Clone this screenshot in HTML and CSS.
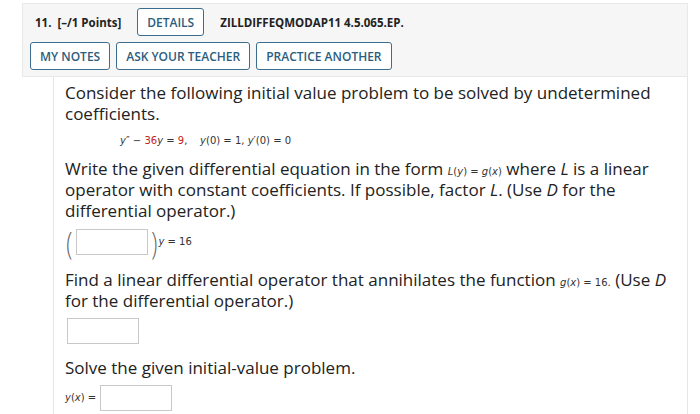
FILE: index.html
```html
<!DOCTYPE html>
<html lang="en">
<head>
  <meta charset="UTF-8">
  <title>Question 11</title>
  <link rel="stylesheet" href="styles.css">
</head>
<body>
  <div class="page">
    <div class="qhead">
      <div class="qrow">
        <span class="qnum">11.</span>
        <span class="qpts">[&ndash;/1 Points]</span>
        <button class="btn">DETAILS</button>
        <span class="qcode">ZILLDIFFEQMODAP11 4.5.065.EP.</span>
      </div>
      <div class="qrow">
        <button class="btn">MY NOTES</button>
        <button class="btn">ASK YOUR TEACHER</button>
        <button class="btn">PRACTICE ANOTHER</button>
      </div>
    </div>
    <div class="qbody">
      <p class="txt">Consider the following initial value problem to be solved by undetermined coefficients.</p>
      <p class="math eq"><i>y</i>&Prime; &minus; <span class="red">36</span><i>y</i> = <span class="red">9</span>,&nbsp;&nbsp;&nbsp; <i>y</i>(0) = 1, <i>y</i>&prime;(0) = 0</p>

      <p class="txt">Write the given differential equation in the form <span class="math"><i>L</i>(<i>y</i>) = <i>g</i>(<i>x</i>)</span> where <i>L</i> is a linear operator with constant coefficients. If possible, factor <i>L</i>. (Use <i>D</i> for the differential operator.)</p>
      <div class="ans">
        <span class="paren">(</span>
        <span class="box"></span>
        <span class="paren">)</span>
        <span class="math"><i>y</i> = 16</span>
      </div>

      <p class="txt">Find a linear differential operator that annihilates the function <span class="math"><i>g</i>(<i>x</i>) = 16.</span> (Use <i>D</i> for the differential operator.)</p>
      <div class="ans">
        <span class="box"></span>
      </div>

      <p class="txt">Solve the given initial-value problem.</p>
      <div class="ans">
        <span class="math"><i>y</i>(<i>x</i>) =</span>
        <span class="box"></span>
      </div>
    </div>
  </div>
</body>
</html>
```

FILE: styles.css
```css
body {
  margin: 0;
  background: #fff;
  color: #222;
  font-family: "Open Sans", "Liberation Sans", sans-serif;
}
.page {
  width: 666px;
  margin: 3px 0 0 22px;
}
.qhead {
  background: #f6f6f6;
  border: 1px solid #e9e9e9;
  padding: 4px 7px 6px;
  display: flex;
  flex-direction: column;
  gap: 6px;
}
.qrow {
  display: flex;
  align-items: center;
  gap: 6px;
}
.qnum {
  font-size: 11.5px;
  font-weight: 700;
  margin-left: 5px;
}
.qpts {
  font-size: 11.5px;
  font-weight: 700;
  margin-right: 10px;
}
.qcode {
  font-size: 11.5px;
  font-weight: 700;
  margin-left: 10px;
}
.btn {
  font-family: "Open Sans", "Liberation Sans", sans-serif;
  font-size: 12px;
  font-weight: 600;
  color: #2b5d7e;
  background: #fff;
  border: 1.5px solid #3c6f8f;
  border-radius: 3px;
  height: 28px;
  padding: 0 9px;
}
.qbody {
  margin-left: 31px;
  border-left: 1px solid #e6e6e6;
  border-right: 1px solid #e6e6e6;
  padding: 5px 0 8px 11px;
  min-height: 330px;
}
.txt {
  font-size: 17px;
  line-height: 21px;
  margin: 0;
  padding-right: 20px;
}
.math {
  font-family: "DejaVu Sans", Verdana, sans-serif;
  font-size: 10px;
  line-height: 1;
  color: #333;
}
.eq {
  margin: 12px 0 12px 55px;
}
.red {
  color: #c62020;
}
.ans {
  display: flex;
  align-items: center;
  margin: 7px 0 13px;
}
.paren {
  font-size: 32px;
  font-weight: 200;
  line-height: 28px;
  color: #666;
  transform: scaleX(0.7);
}
.box {
  display: inline-block;
  width: 70px;
  height: 24px;
  border: 1px solid #c8c8c8;
  background: #fff;
  margin: 0 2px;
}
.ans .math {
  margin-right: 2px;
}
```
